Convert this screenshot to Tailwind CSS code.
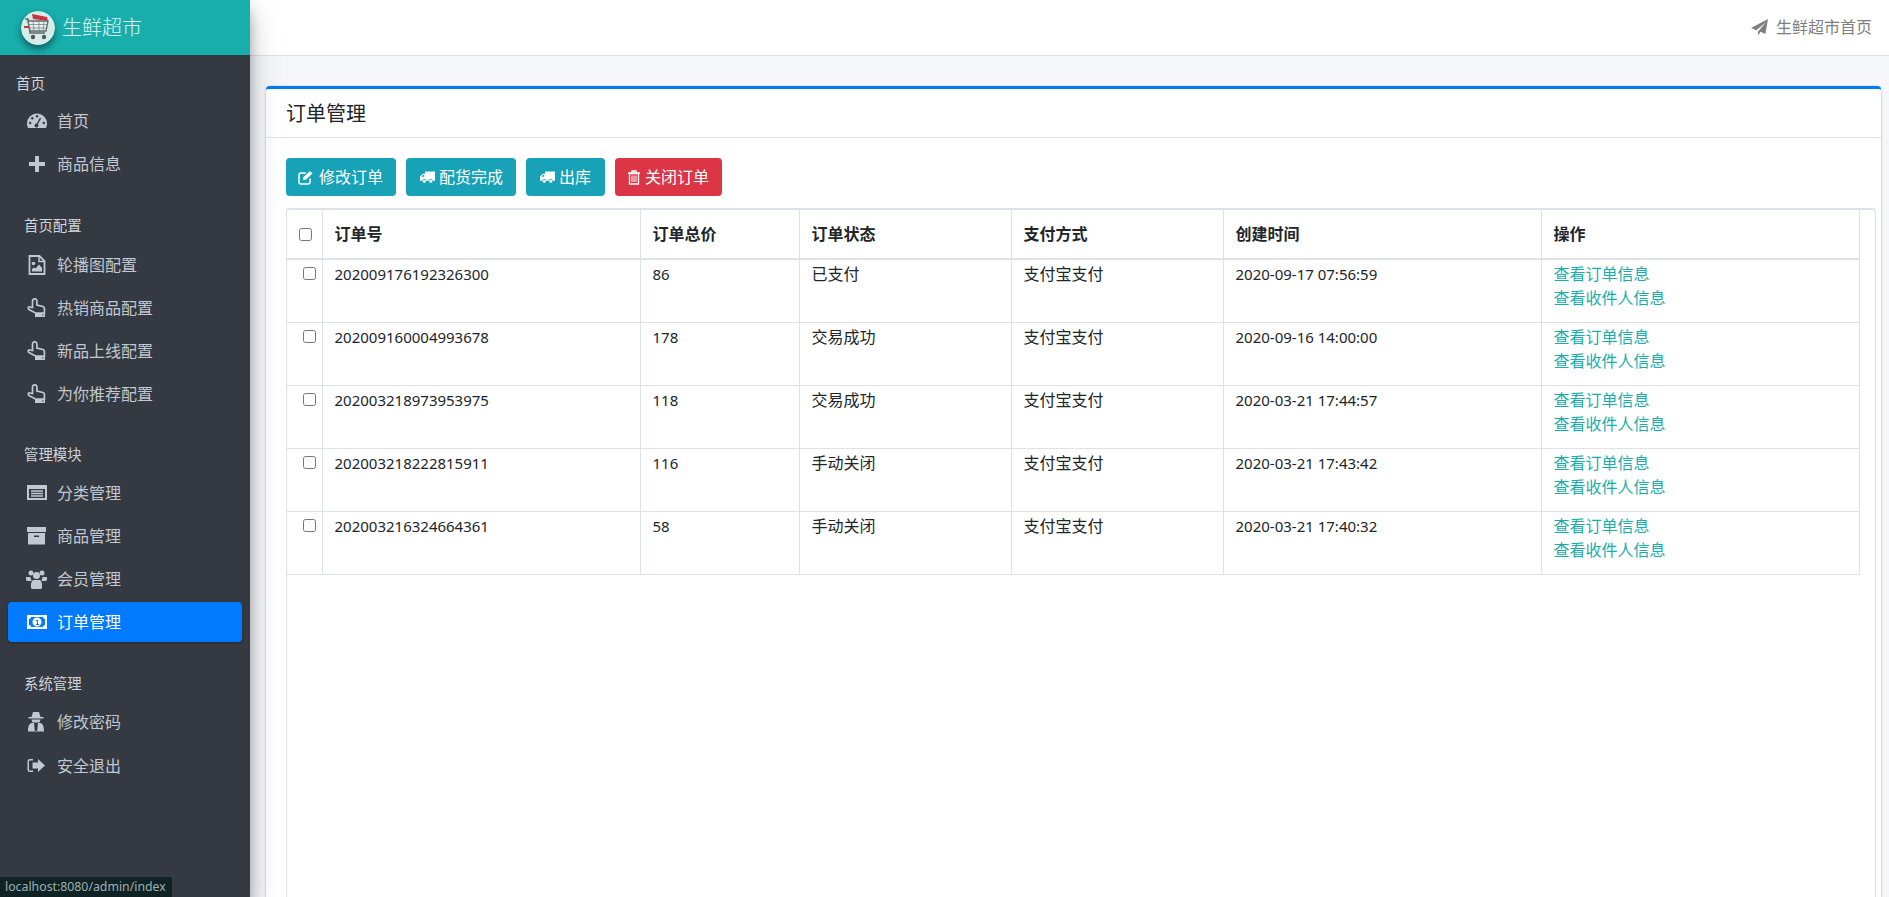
<!DOCTYPE html>
<html lang="zh">
<head>
    <meta charset="UTF-8">
    <title>订单管理</title>
    <script src="https://cdn.jsdelivr.net/npm/@tailwindcss/browser@4"></script>
</head>
<body class="h-[897px] w-[1889px] overflow-hidden bg-[#f4f6f9] text-[#212529] text-[14px] font-['Noto_Sans','Noto_Sans_CJK_SC',sans-serif]">
<div class="flex h-full">
    <!-- 侧边栏 -->
    <aside class="relative z-10 w-[250px] shrink-0 bg-[#353a42] shadow-[0_14px_28px_rgba(0,0,0,0.25),0_10px_10px_rgba(0,0,0,0.22)]">
        <div class="flex h-[55px] items-center gap-[7px] bg-[#17aeac] pl-[21px]">
            <svg class="rounded-full shadow-[0_4px_7px_rgba(0,0,0,0.45)]" width="34" height="34" viewBox="0 0 34 34">
                <circle cx="17" cy="17" r="17" fill="#d6ecea"/>
                <path d="M11 3l15 3 1 4-15-2z" fill="#c8343c"/>
                <path d="M4 8h3l2 14h15" fill="none" stroke="#5d6a68" stroke-width="1.500"/>
                <path d="M7 10h20l-2 10H9z" fill="#e8f2f0" stroke="#5d6a68" stroke-width="1.300"/>
                <path d="M8 13.500h18M8.500 17h17M12 10l1 10M18 10v10M23 10l-1 10" stroke="#7b8886" stroke-width=".8"/>
                <rect x="3" y="15" width="5" height="2" fill="#c8343c"/>
                <circle cx="12" cy="26" r="2.200" fill="#555"/><circle cx="23" cy="26" r="2.200" fill="#555"/>
            </svg>
            <span class="text-[20px] font-light text-white/85">生鲜超市</span>
        </div>
        <nav class="px-[8px] text-[#c2c7d0] text-[16px]">
            <p class="pl-[8px] pt-[19px] pb-[7px] text-[14.400px] leading-[20px] text-[#d0d4db]">首页</p>
            <a class="flex h-[40px] items-center rounded pl-[19px] mb-[3px]">
                <svg class="w-[20px] h-[16px]" viewBox="0 0 20 16">
                    <path d="M0 10.500a10 10 0 0 1 20 0c0 1.800-.4 3.300-1.100 4.500H1.100C.4 13.800 0 12.300 0 10.500z" fill="currentColor"/>
                    <g fill="#353a42"><circle cx="10" cy="3.200" r="1.200"/><circle cx="5.300" cy="5.300" r="1.200"/><circle cx="3.200" cy="10" r="1.200"/><circle cx="16.800" cy="10" r="1.200"/><circle cx="9.500" cy="12.500" r="1.900"/></g>
                    <path d="M9.500 12.500L13.500 5" stroke="#353a42" stroke-width="1.500"/>
                </svg>
                <span class="ml-[10px]">首页</span>
            </a>
            <a class="flex h-[40px] items-center rounded pl-[19px]">
                <svg class="w-[20px] h-[16px]" viewBox="0 0 20 16" fill="currentColor"><path d="M8 0h4v6h6v4h-6v6H8v-6H2V6h6z"/></svg>
                <span class="ml-[10px]">商品信息</span>
            </a>
            <p class="pl-[16px] pt-[32px] pb-[9px] text-[14.400px] leading-[20px] text-[#d0d4db]">首页配置</p>
            <a class="flex h-[40px] items-center rounded pl-[19px] mb-[3px]">
                <svg class="w-[20px] h-[20px]" viewBox="0 0 20 20"><path d="M2.500 1h10l5 5v13h-15z" fill="none" stroke="currentColor" stroke-width="1.800"/><path d="M12 1.500v5h5" fill="none" stroke="currentColor" stroke-width="1.500"/><circle cx="6.500" cy="8.500" r="1.800" fill="currentColor"/><path d="M5 16.500v-2.500l2-1.500 1.500 1 3.500-4 3 3.500v3.500z" fill="currentColor"/></svg>
                <span class="ml-[10px]">轮播图配置</span>
            </a>
            <a class="flex h-[40px] items-center rounded pl-[19px] mb-[3px]">
                <svg class="w-[20px] h-[20px]" viewBox="0 0 20 20"><path d="M5.500 3a2.200 2.200 0 0 1 4.400 0v4l6 1.500c1 .3 1.500 1 1.500 2V15h-9L2 11.500c-1.500-1-.5-3 1-2.500l2.500.5z" fill="none" stroke="currentColor" stroke-width="1.700"/><path d="M8 15h10v4H8zM15 16.500v1h1.500v-1z" fill="currentColor" fill-rule="evenodd"/></svg>
                <span class="ml-[10px]">热销商品配置</span>
            </a>
            <a class="flex h-[40px] items-center rounded pl-[19px] mb-[3px]">
                <svg class="w-[20px] h-[20px]" viewBox="0 0 20 20"><path d="M5.500 3a2.200 2.200 0 0 1 4.400 0v4l6 1.500c1 .3 1.500 1 1.500 2V15h-9L2 11.500c-1.500-1-.5-3 1-2.500l2.500.5z" fill="none" stroke="currentColor" stroke-width="1.700"/><path d="M8 15h10v4H8zM15 16.500v1h1.500v-1z" fill="currentColor" fill-rule="evenodd"/></svg>
                <span class="ml-[10px]">新品上线配置</span>
            </a>
            <a class="flex h-[40px] items-center rounded pl-[19px]">
                <svg class="w-[20px] h-[20px]" viewBox="0 0 20 20"><path d="M5.500 3a2.200 2.200 0 0 1 4.400 0v4l6 1.500c1 .3 1.500 1 1.500 2V15h-9L2 11.500c-1.500-1-.5-3 1-2.500l2.500.5z" fill="none" stroke="currentColor" stroke-width="1.700"/><path d="M8 15h10v4H8zM15 16.500v1h1.500v-1z" fill="currentColor" fill-rule="evenodd"/></svg>
                <span class="ml-[10px]">为你推荐配置</span>
            </a>
            <p class="pl-[16px] pt-[31px] pb-[8px] text-[14.400px] leading-[20px] text-[#d0d4db]">管理模块</p>
            <a class="flex h-[40px] items-center rounded pl-[19px] mb-[3px]">
                <svg class="w-[20px] h-[16px]" viewBox="0 0 20 16"><path d="M0 0h20v15H0zM2 4v9h16V4z" fill="currentColor" fill-rule="evenodd"/><path d="M4 6h12M4 8.500h12M4 11h12" stroke="currentColor" stroke-width="1.300"/></svg>
                <span class="ml-[10px]">分类管理</span>
            </a>
            <a class="flex h-[40px] items-center rounded pl-[19px] mb-[3px]">
                <svg class="w-[20px] h-[18px]" viewBox="0 0 20 18" fill="currentColor"><path d="M0 0h19v5H0zM1 6h17v11.500H1zm6 2.500v1.500h5V8.500z" fill-rule="evenodd"/></svg>
                <span class="ml-[10px]">商品管理</span>
            </a>
            <a class="flex h-[40px] items-center rounded pl-[18px] mb-[3px]">
                <svg class="w-[21px] h-[20px]" viewBox="0 0 21 20" fill="currentColor"><circle cx="5" cy="4" r="2.500"/><circle cx="16" cy="4" r="2.500"/><circle cx="10.500" cy="6.500" r="3.500"/><path d="M0 8h4.500l1 4H1.500a1.500 1.500 0 0 1-1.500-1.500zM21 8h-4.500l-1 4h4a1.500 1.500 0 0 0 1.500-1.500zM5 19c-.5-7 1.500-8 3-8h5c1.500 0 3.500 1 3 8-.5 1-1.500 1-2 1H7c-.5 0-1.500 0-2-1z"/></svg>
                <span class="ml-[10px]">会员管理</span>
            </a>
            <a class="flex h-[40px] items-center rounded bg-[#007bff] text-white pl-[19px] shadow-[0_1px_3px_rgba(0,0,0,0.3)]">
                <svg class="w-[20px] h-[14px]" viewBox="0 0 20 14" fill="currentColor"><path d="M0 0h20v14H0zm4 2a2 2 0 0 1-2 2v6a2 2 0 0 1 2 2h12a2 2 0 0 1 2-2V4a2 2 0 0 1-2-2zm6 .500a4.500 4.500 0 1 1 0 9 4.500 4.500 0 0 1 0-9zM9 5v1h1v3H9v1h3V9h-1V5z" fill-rule="evenodd"/></svg>
                <span class="ml-[10px]">订单管理</span>
            </a>
            <p class="pl-[16px] pt-[32px] pb-[8px] text-[14.400px] leading-[20px] text-[#d0d4db]">系统管理</p>
            <a class="flex h-[40px] items-center rounded pl-[20px] mb-[4px]">
                <svg class="w-[16px] h-[20px]" viewBox="0 0 16 20" fill="currentColor"><path d="M5 0h6l1.500 5h3v1.500H.5V5h3zM3.500 7.500h9l-1 3h-7zM0 19.500c0-5 1-8 4-8.500h2l.8 8h2.400l.8-8h2c3 .5 4 3.500 4 8.500z"/></svg>
                <span class="ml-[13px]">修改密码</span>
            </a>
            <a class="flex h-[40px] items-center rounded pl-[19px]">
                <svg class="w-[20px] h-[16px]" viewBox="0 0 20 16" fill="currentColor"><path d="M6 1H3a2.500 2.500 0 0 0-2.500 2.500v8A2.500 2.500 0 0 0 3 14h3v-1.500H3a1 1 0 0 1-1-1v-8a1 1 0 0 1 1-1h3zM11 1l7 6.500-7 6.500v-3.500H5.500v-6H11z"/></svg>
                <span class="ml-[10px]">安全退出</span>
            </a>
        </nav>
        <div class="absolute bottom-0 left-0 flex h-[20px] w-[172px] items-center rounded-tr-[3px] bg-[#0f2224] pl-[5px] text-[12.300px] text-[#9fb0b0]">localhost:8080/admin/index</div>
    </aside>

    <div class="flex min-w-0 flex-1 flex-col">
        <!-- 顶部导航 -->
        <header class="flex h-[56px] shrink-0 items-center justify-end border-b border-[#dee2e6] bg-white pb-[1px] pr-[17px] text-[16px] text-[#7f7f7f]">
            <svg class="mr-[8px] w-[17px] h-[17px]" viewBox="0 0 16 16" fill="currentColor"><path d="M16 0L13.500 14 9 12l-2.500 3.500V12L14 3 5 10.500 0 8.500z"/></svg>
            <span>生鲜超市首页</span>
        </header>
        <!-- 内容 -->
        <main class="min-h-0 flex-1 pl-[16px] pr-[8px] pt-[30px]">
            <section class="h-[811px] rounded-t-[4px] border-t-[3px] border-[#007bff] bg-white shadow-[0_0_1px_rgba(0,0,0,0.3),0_1px_3px_rgba(0,0,0,0.2)]">
                <div class="flex h-[49px] items-center border-b border-[#dee2e6] pl-[20px] pt-[1px] text-[20px] text-[#212529]">订单管理</div>
                <div class="pl-[20px] pr-[5px] pt-[20px]">
                    <div class="flex gap-[10px] text-[16px] text-white">
                        <button class="flex h-[38px] w-[110px] items-center rounded-[4px] bg-[#17a2b8] pl-[12px]">
                            <svg class="mr-[6px] w-[15px] h-[15px]" viewBox="0 0 15 15"><path d="M12 8.500V12a2 2 0 0 1-2 2H3a2 2 0 0 1-2-2V5a2 2 0 0 1 2-2h5" fill="none" stroke="currentColor" stroke-width="1.500"/><path d="M5 10V7.500L12 1l2.500 2.500L7.500 10z" fill="currentColor"/></svg>修改订单
                        </button>
                        <button class="flex h-[38px] w-[110px] items-center rounded-[4px] bg-[#17a2b8] pl-[14px]">
                            <svg class="mr-[4px] w-[15px] h-[14px]" viewBox="0 0 16 14" fill="currentColor"><path d="M5.500 1H16v10h-2.500a2 2 0 0 0-4 0h-3a2 2 0 0 0-4 0H0V6.500L3 3.500h2.500zM1.500 6.800h3V4.700H3.500z" fill-rule="evenodd"/><circle cx="4.500" cy="11.500" r="1.600"/><circle cx="11.500" cy="11.500" r="1.600"/></svg>配货完成
                        </button>
                        <button class="flex h-[38px] w-[79px] items-center rounded-[4px] bg-[#17a2b8] pl-[14px]">
                            <svg class="mr-[4px] w-[15px] h-[14px]" viewBox="0 0 16 14" fill="currentColor"><path d="M5.500 1H16v10h-2.500a2 2 0 0 0-4 0h-3a2 2 0 0 0-4 0H0V6.500L3 3.500h2.500zM1.500 6.800h3V4.700H3.500z" fill-rule="evenodd"/><circle cx="4.500" cy="11.500" r="1.600"/><circle cx="11.500" cy="11.500" r="1.600"/></svg>出库
                        </button>
                        <button class="flex h-[38px] w-[107px] items-center rounded-[4px] bg-[#dc3545] pl-[13px]">
                            <svg class="mr-[5px] w-[12px] h-[15px]" viewBox="0 0 12 15"><path d="M0 3h12M4 3V1h4v2" fill="none" stroke="currentColor" stroke-width="1.300"/><path d="M1.500 3.500h9V14h-9z" fill="none" stroke="currentColor" stroke-width="1.300"/><path d="M4 5.500V12M6 5.500V12M8 5.500V12" stroke="currentColor"/></svg>关闭订单
                        </button>
                    </div>
                    <div class="mt-[12px] h-[689px] rounded-t-[4px] border-x border-t-[2px] border-[#dee2e6]">
                        <table class="w-[1572px] table-fixed border-collapse text-[16px] leading-[22px]">
                            <colgroup>
                                <col class="w-[35px]"><col class="w-[318px]"><col class="w-[159px]"><col class="w-[212px]"><col class="w-[212px]"><col class="w-[318px]"><col class="w-[318px]">
                            </colgroup>
                            <thead class="font-bold">
                                <tr class="h-[49px] border-b-[2px] border-[#dee2e6] text-left">
                                    <th class="border-r border-[#dee2e6] pl-[12px]"><input type="checkbox" class="block w-[13px] h-[13px]"></th>
                                    <th class="border-r border-[#dee2e6] pl-[12px]">订单号</th>
                                    <th class="border-r border-[#dee2e6] pl-[12px]">订单总价</th>
                                    <th class="border-r border-[#dee2e6] pl-[12px]">订单状态</th>
                                    <th class="border-r border-[#dee2e6] pl-[12px]">支付方式</th>
                                    <th class="border-r border-[#dee2e6] pl-[12px]">创建时间</th>
                                    <th class="border-r border-[#dee2e6] pl-[12px]">操作</th>
                                </tr>
                            </thead>
                            <tbody>
                                <tr class="border-b border-[#dee2e6] align-top">
                                    <td class="border-r border-[#dee2e6] pl-[16px] pt-[7px]"><input type="checkbox" class="block w-[13px] h-[13px]"></td>
                                    <td class="border-r border-[#dee2e6] pl-[12px] pt-[3px] text-[15px]">202009176192326300</td>
                                    <td class="border-r border-[#dee2e6] pl-[12px] pt-[3px] text-[15px]">86</td>
                                    <td class="border-r border-[#dee2e6] pl-[12px] pt-[3px]">已支付</td>
                                    <td class="border-r border-[#dee2e6] pl-[12px] pt-[3px]">支付宝支付</td>
                                    <td class="border-r border-[#dee2e6] pl-[12px] pt-[3px] text-[15px]">2020-09-17 07:56:59</td>
                                    <td class="border-r border-[#dee2e6] pl-[12px] pt-[2px] pb-[12px] leading-[24px] text-[#17aeac]"><a class="block">查看订单信息</a><a class="block">查看收件人信息</a></td>
                                </tr>
                                <tr class="border-b border-[#dee2e6] align-top">
                                    <td class="border-r border-[#dee2e6] pl-[16px] pt-[7px]"><input type="checkbox" class="block w-[13px] h-[13px]"></td>
                                    <td class="border-r border-[#dee2e6] pl-[12px] pt-[3px] text-[15px]">202009160004993678</td>
                                    <td class="border-r border-[#dee2e6] pl-[12px] pt-[3px] text-[15px]">178</td>
                                    <td class="border-r border-[#dee2e6] pl-[12px] pt-[3px]">交易成功</td>
                                    <td class="border-r border-[#dee2e6] pl-[12px] pt-[3px]">支付宝支付</td>
                                    <td class="border-r border-[#dee2e6] pl-[12px] pt-[3px] text-[15px]">2020-09-16 14:00:00</td>
                                    <td class="border-r border-[#dee2e6] pl-[12px] pt-[2px] pb-[12px] leading-[24px] text-[#17aeac]"><a class="block">查看订单信息</a><a class="block">查看收件人信息</a></td>
                                </tr>
                                <tr class="border-b border-[#dee2e6] align-top">
                                    <td class="border-r border-[#dee2e6] pl-[16px] pt-[7px]"><input type="checkbox" class="block w-[13px] h-[13px]"></td>
                                    <td class="border-r border-[#dee2e6] pl-[12px] pt-[3px] text-[15px]">202003218973953975</td>
                                    <td class="border-r border-[#dee2e6] pl-[12px] pt-[3px] text-[15px]">118</td>
                                    <td class="border-r border-[#dee2e6] pl-[12px] pt-[3px]">交易成功</td>
                                    <td class="border-r border-[#dee2e6] pl-[12px] pt-[3px]">支付宝支付</td>
                                    <td class="border-r border-[#dee2e6] pl-[12px] pt-[3px] text-[15px]">2020-03-21 17:44:57</td>
                                    <td class="border-r border-[#dee2e6] pl-[12px] pt-[2px] pb-[12px] leading-[24px] text-[#17aeac]"><a class="block">查看订单信息</a><a class="block">查看收件人信息</a></td>
                                </tr>
                                <tr class="border-b border-[#dee2e6] align-top">
                                    <td class="border-r border-[#dee2e6] pl-[16px] pt-[7px]"><input type="checkbox" class="block w-[13px] h-[13px]"></td>
                                    <td class="border-r border-[#dee2e6] pl-[12px] pt-[3px] text-[15px]">202003218222815911</td>
                                    <td class="border-r border-[#dee2e6] pl-[12px] pt-[3px] text-[15px]">116</td>
                                    <td class="border-r border-[#dee2e6] pl-[12px] pt-[3px]">手动关闭</td>
                                    <td class="border-r border-[#dee2e6] pl-[12px] pt-[3px]">支付宝支付</td>
                                    <td class="border-r border-[#dee2e6] pl-[12px] pt-[3px] text-[15px]">2020-03-21 17:43:42</td>
                                    <td class="border-r border-[#dee2e6] pl-[12px] pt-[2px] pb-[12px] leading-[24px] text-[#17aeac]"><a class="block">查看订单信息</a><a class="block">查看收件人信息</a></td>
                                </tr>
                                <tr class="border-b border-[#dee2e6] align-top">
                                    <td class="border-r border-[#dee2e6] pl-[16px] pt-[7px]"><input type="checkbox" class="block w-[13px] h-[13px]"></td>
                                    <td class="border-r border-[#dee2e6] pl-[12px] pt-[3px] text-[15px]">202003216324664361</td>
                                    <td class="border-r border-[#dee2e6] pl-[12px] pt-[3px] text-[15px]">58</td>
                                    <td class="border-r border-[#dee2e6] pl-[12px] pt-[3px]">手动关闭</td>
                                    <td class="border-r border-[#dee2e6] pl-[12px] pt-[3px]">支付宝支付</td>
                                    <td class="border-r border-[#dee2e6] pl-[12px] pt-[3px] text-[15px]">2020-03-21 17:40:32</td>
                                    <td class="border-r border-[#dee2e6] pl-[12px] pt-[2px] pb-[12px] leading-[24px] text-[#17aeac]"><a class="block">查看订单信息</a><a class="block">查看收件人信息</a></td>
                                </tr>
                            </tbody>
                        </table>
                    </div>
                </div>
            </section>
        </main>
    </div>
</div>
</body>
</html>
